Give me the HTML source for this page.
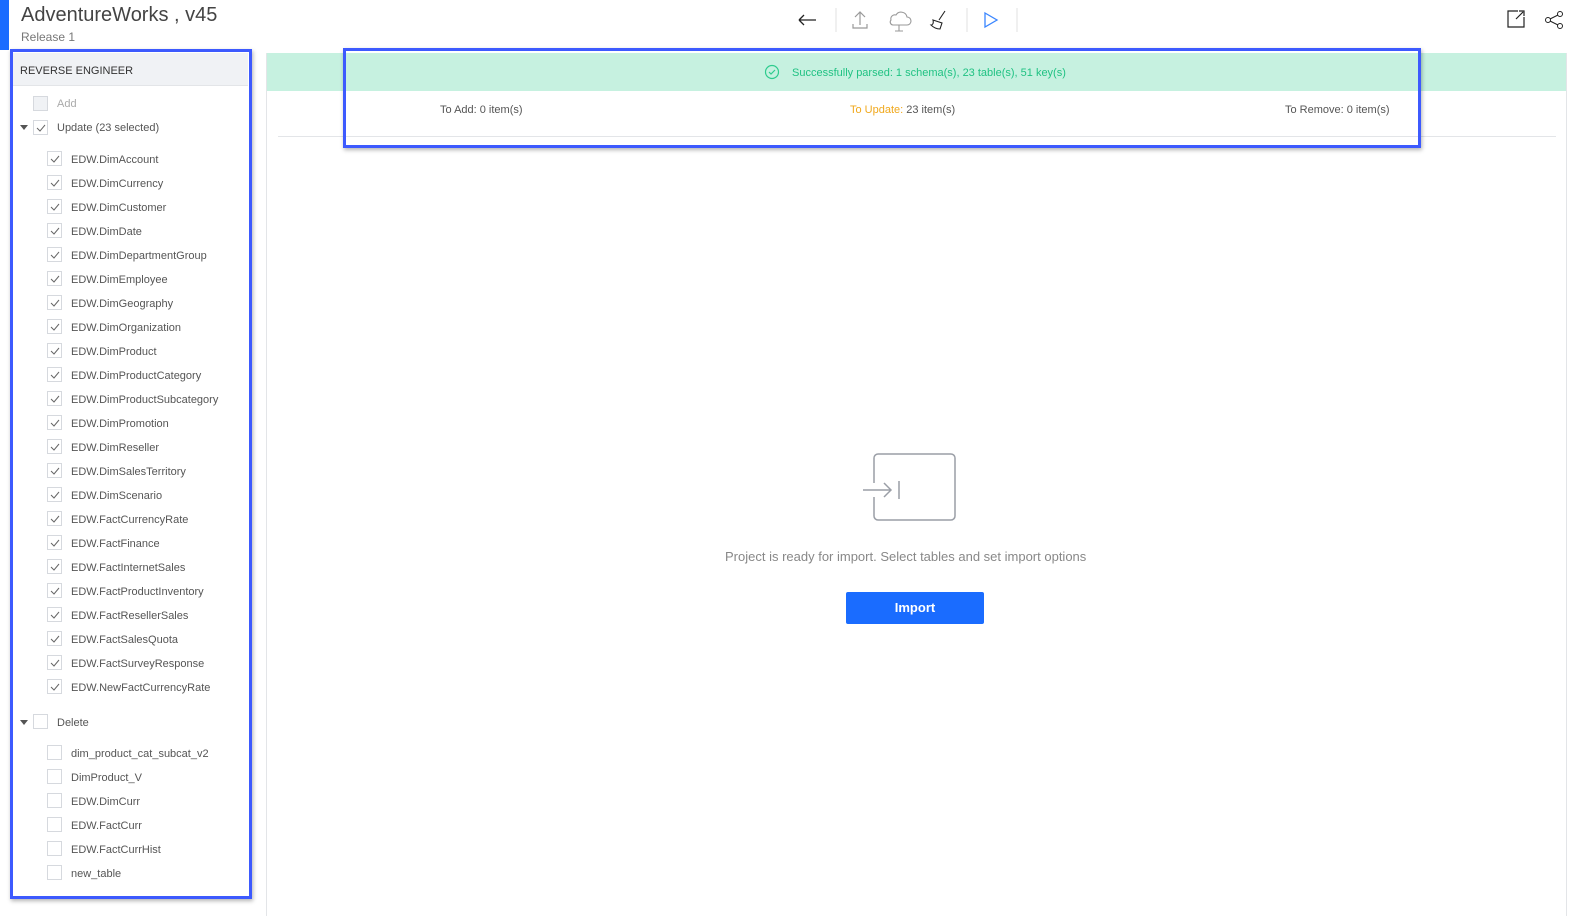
<!DOCTYPE html>
<html><head><meta charset="utf-8"><style>
*{margin:0;padding:0;box-sizing:border-box}
body{width:1571px;height:916px;overflow:hidden;background:#fff;font-family:"Liberation Sans",sans-serif;position:relative;color:#444}
.a{position:absolute}
.cb{position:absolute;width:15px;height:15px;border:1px solid #d6d9de;background:#fff}
.cb svg{position:absolute;left:2px;top:2px}
.t{position:absolute;font-size:11px;color:#555;white-space:nowrap;line-height:14px}
</style></head><body>
<div class="a" style="left:0;top:0;width:9px;height:50px;background:#1a6cff"></div>
<div class="a" style="left:21px;top:4px;font-size:20px;color:#444">AdventureWorks , v45</div>
<div class="a" style="left:21px;top:30px;font-size:12px;color:#777">Release 1</div>

<svg class="a" style="left:791px;top:6px" width="240" height="28" viewBox="0 0 240 28">
<path d="M8 14h17M8 14l5-5M8 14l5 5" stroke="#222" stroke-width="1.3" fill="none"/>
<line x1="45" y1="2" x2="45" y2="26" stroke="#e2e2e2"/>
<path d="M69 6v13M64 11l5-5 5 5M62 18v4h14v-4" stroke="#999" stroke-width="1.2" fill="none"/>
<path d="M102 19h14a4 4 0 0 0 0-8 6 6 0 0 0-11-2 4 4 0 0 0-5 5 3 3 0 0 0 2 5zM108 19v6M104 25h8" stroke="#999" stroke-width="1.1" fill="none"/>
<path d="M154 5l-6 9M142 14l9 3-2 6c-3 0-6-1-9-4 1 0 3-1 2-5z" stroke="#222" stroke-width="1.1" fill="none"/>
<line x1="176" y1="2" x2="176" y2="26" stroke="#e2e2e2"/>
<path d="M194 7l12 7-12 7z" stroke="#3a86ff" stroke-width="1.3" fill="none"/>
<line x1="226" y1="2" x2="226" y2="26" stroke="#e2e2e2"/>
</svg>
<svg class="a" style="left:1506px;top:10px" width="60" height="22">
<path d="M12 1h-10v16h16v-10M10 9l7-7M13 1h5v5" stroke="#222" stroke-width="1.2" fill="none"/>
<circle cx="54" cy="4" r="2.5" stroke="#222" fill="none"/><circle cx="54" cy="16" r="2.5" stroke="#222" fill="none"/><circle cx="42" cy="10" r="2.5" stroke="#222" fill="none"/>
<path d="M44 9l8-4M44 11l8 4" stroke="#222"/>
</svg>

<div class="a" style="left:10px;top:53px;width:238px;height:33px;background:#f0f2f5;border-bottom:1px solid #e3e5e8"></div>
<div class="a" style="left:20px;top:65px;font-size:11px;color:#333">REVERSE ENGINEER</div>
<div class="a" style="left:266px;top:53px;width:1px;height:863px;background:#e3e5e8"></div>
<div class="a" style="left:1566px;top:53px;width:1px;height:863px;background:#e3e5e8"></div>

<div class="cb" style="left:33px;top:96px;background:#f0f2f5"></div><div class="t" style="left:57px;top:97px;color:#aaa">Add</div>
<svg class="a" style="left:20px;top:125px" width="8" height="6"><path d="M0 0h8L4 5z" fill="#555"/></svg>
<div class="cb" style="left:33px;top:120px"><svg width="10" height="10"><path d="M1 5l3 3 5-6" stroke="#666" fill="none"/></svg></div><div class="t" style="left:57px;top:121px">Update (23 selected)</div>

<div id="list"></div>
<script>
var n=["EDW.DimAccount","EDW.DimCurrency","EDW.DimCustomer","EDW.DimDate","EDW.DimDepartmentGroup","EDW.DimEmployee","EDW.DimGeography","EDW.DimOrganization","EDW.DimProduct","EDW.DimProductCategory","EDW.DimProductSubcategory","EDW.DimPromotion","EDW.DimReseller","EDW.DimSalesTerritory","EDW.DimScenario","EDW.FactCurrencyRate","EDW.FactFinance","EDW.FactInternetSales","EDW.FactProductInventory","EDW.FactResellerSales","EDW.FactSalesQuota","EDW.FactSurveyResponse","EDW.NewFactCurrencyRate"];
var d=["dim_product_cat_subcat_v2","DimProduct_V","EDW.DimCurr","EDW.FactCurr","EDW.FactCurrHist","new_table"];
var h="";
n.forEach(function(s,i){var y=151+i*24;h+='<div class="cb" style="left:47px;top:'+y+'px"><svg width="10" height="10"><path d="M1 5l3 3 5-6" stroke="#666" fill="none"/></svg></div><div class="t" style="left:71px;top:'+(y+2)+'px">'+s+'</div>';});
d.forEach(function(s,i){var y=745+i*24;h+='<div class="cb" style="left:47px;top:'+y+'px"></div><div class="t" style="left:71px;top:'+(y+2)+'px">'+s+'</div>';});
document.getElementById("list").innerHTML=h;
</script>
<svg class="a" style="left:20px;top:720px" width="8" height="6"><path d="M0 0h8L4 5z" fill="#555"/></svg>
<div class="cb" style="left:33px;top:714px"></div><div class="t" style="left:57px;top:716px">Delete</div>

<div class="a" style="left:267px;top:53px;width:1299px;height:38px;background:#c6f1e0"></div>
<svg class="a" style="left:764px;top:64px" width="16" height="16"><circle cx="8" cy="8" r="6.5" stroke="#2ecc8e" stroke-width="1.2" fill="none"/><path d="M5 8l2 2 4-4" stroke="#2ecc8e" stroke-width="1.2" fill="none"/></svg>
<div class="t" style="left:792px;top:66px;color:#20c283">Successfully parsed: 1 schema(s), 23 table(s), 51 key(s)</div>
<div class="t" style="left:440px;top:103px">To Add: 0 item(s)</div>
<div class="t" style="left:850px;top:103px"><span style="color:#f0a81c">To Update:</span> 23 item(s)</div>
<div class="t" style="left:1285px;top:103px">To Remove: 0 item(s)</div>
<div class="a" style="left:278px;top:136px;width:1278px;height:1px;background:#e3e5e8"></div>

<svg class="a" style="left:861px;top:452px" width="96" height="70"><rect x="13" y="2" width="81" height="66" rx="4" stroke="#9a9ea6" stroke-width="1.5" fill="none"/><rect x="11" y="31" width="4" height="14" fill="#fff"/><path d="M2 38h28M23 31l7 7-7 7M38 29v18" stroke="#9a9ea6" stroke-width="1.5" fill="none"/></svg>
<div class="a" style="left:725px;top:549px;font-size:13px;color:#888">Project is ready for import. Select tables and set import options</div>
<div class="a" style="left:846px;top:592px;width:138px;height:32px;background:#1a6cff;border-radius:2px;color:#fff;font-size:13px;text-align:center;line-height:32px;font-weight:bold">Import</div>

<div class="a" style="left:10px;top:49px;width:242px;height:850px;border:3px solid #3d5afe;box-shadow:1px 2px 4px rgba(0,0,0,.3)"></div>
<div class="a" style="left:343px;top:48px;width:1078px;height:100px;border:3px solid #3d5afe;box-shadow:1px 2px 4px rgba(0,0,0,.3)"></div>
</body></html>
